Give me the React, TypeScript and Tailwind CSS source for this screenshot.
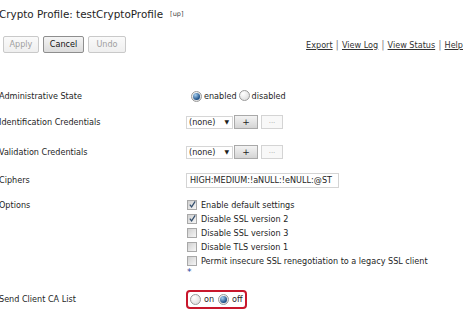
import React from "react";

function Radio({ checked }: { checked?: boolean }) {
  return (
    <span className="inline-flex items-center justify-center w-[11px] h-[11px] rounded-full border border-[#9a9a9a] bg-[radial-gradient(circle_at_35%_30%,#ffffff,#d6d6d6)] shrink-0">
      {checked && (
        <span className="block w-[7px] h-[7px] rounded-full bg-[radial-gradient(circle_at_35%_30%,#a6cff0,#1d4f86_70%)]" />
      )}
    </span>
  );
}

function Check({ checked }: { checked?: boolean }) {
  return (
    <span className="relative inline-block w-[10px] h-[10px] border border-[#a8a8a8] bg-[linear-gradient(135deg,#d0d0d0,#f6f6f6)] shrink-0">
      {checked && (
        <svg viewBox="0 0 10 10" className="absolute left-[0px] top-[-1px] w-[9px] h-[9px]">
          <path d="M2 5.2 L4 7.6 L8 1.6" fill="none" stroke="#35506e" strokeWidth="1.4" />
        </svg>
      )}
    </span>
  );
}

function Btn({ label, enabled, w }: { label: string; enabled?: boolean; w: string }) {
  return (
    <span
      className={
        "inline-flex items-center justify-center h-[17px] " +
        w +
        " " +
        (enabled
          ? "border border-[#8e8e8e] bg-[linear-gradient(#f4f4f4,#dcdcdc)] text-[#111] rounded-[2px]"
          : "border border-[#c9c9c9] bg-[linear-gradient(#fafafa,#efefef)] text-[#a0a0a0] rounded-[2px]")
      }
    >
      {label}
    </span>
  );
}

function SelectRow() {
  return (
    <div className="flex items-center">
      <span className="flex items-center justify-between w-[47px] h-[13px] border border-[#d6d6d6] bg-white pl-[2px] pr-[3px]">
        <span>(none)</span>
        <span className="text-[6px] leading-none">▼</span>
      </span>
      <span className="ml-[1px] inline-flex items-center justify-center w-[24px] h-[14px] border border-[#a9a9a9] bg-[linear-gradient(#f3f3f3,#d4d4d4)] text-[#222] text-[9px] leading-none">
        +
      </span>
      <span className="ml-[3px] inline-flex items-center justify-center w-[22px] h-[14px] border border-[#d4d4d4] bg-[#f8f8f8] text-[#aaa] text-[7px] leading-none pb-[2px]">
        ...
      </span>
    </div>
  );
}

export default function App() {
  const opts: [string, boolean][] = [
    ["Enable default settings", true],
    ["Disable SSL version 2", true],
    ["Disable SSL version 3", false],
    ["Disable TLS version 1", false],
    ["Permit insecure SSL renegotiation to a legacy SSL client", false],
  ];
  return (
    <div className="w-[474px] h-[312px] bg-white overflow-hidden font-['DejaVu_Sans',sans-serif] text-[8.1px] leading-none text-[#1e1e1e]">
      <div className="h-[28px] flex items-center ml-[-1px]">
        <span className="text-[10.4px]">Crypto Profile: testCryptoProfile</span>
        <span className="ml-[7px] text-[6.5px] text-[#444]">[up]</span>
      </div>
      <div className="mt-[8px] flex items-center justify-between pl-[3px] pr-[11px]">
        <div className="flex items-center gap-[4px]">
          <Btn label="Apply" w="w-[36px]" />
          <Btn label="Cancel" enabled w="w-[41px]" />
          <Btn label="Undo" w="w-[38px]" />
        </div>
        <div className="flex items-center gap-[3px] text-[#333] pt-[1px]">
          <span className="underline">Export</span>
          <span className="text-[#888] text-[10px]">|</span>
          <span className="underline">View Log</span>
          <span className="text-[#888] text-[10px]">|</span>
          <span className="underline">View Status</span>
          <span className="text-[#888] text-[10px]">|</span>
          <span className="underline">Help</span>
        </div>
      </div>

      <div className="ml-[-1px] mt-[33px]">
        <div className="flex items-center h-[20px]">
          <span className="w-[192px]">Administrative State</span>
          <Radio checked />
          <span className="ml-[2px]">enabled</span>
          <span className="ml-[2px]"><Radio /></span>
          <span className="ml-[2px]">disabled</span>
        </div>
        <div className="flex items-center h-[20px] mt-[6px]">
          <span className="w-[187px]">Identification Credentials</span>
          <SelectRow />
        </div>
        <div className="flex items-center h-[20px] mt-[10px]">
          <span className="w-[187px]">Validation Credentials</span>
          <SelectRow />
        </div>
        <div className="flex items-center h-[20px] mt-[8px]">
          <span className="w-[187px]">Ciphers</span>
          <span className="flex items-center w-[153px] h-[15px] border border-[#d4d4d4] pl-[3px] overflow-hidden whitespace-nowrap">
            HIGH:MEDIUM:!aNULL:!eNULL:@ST
          </span>
        </div>
        <div className="flex mt-[8px]">
          <span className="w-[188px] pt-[3px]">Options</span>
          <div className="flex flex-col">
            {opts.map(([t, c]) => (
              <div key={t} className="flex items-center h-[14px]">
                <Check checked={c} />
                <span className="ml-[4px]">{t}</span>
              </div>
            ))}
            <span className="text-[#2a3f9a] text-[9px] leading-none h-[10px] pl-[0px]">*</span>
          </div>
        </div>
        <div className="flex items-center h-[20px] mt-[11px]">
          <span className="w-[187px]">Send Client CA List</span>
          <span className="flex items-center h-[19px] w-[61px] border-2 border-[#c8172c] rounded-[4px] pl-[2px]">
            <Radio />
            <span className="ml-[3px]">on</span>
            <span className="ml-[4px]"><Radio checked /></span>
            <span className="ml-[3px]">off</span>
          </span>
        </div>
      </div>
    </div>
  );
}
